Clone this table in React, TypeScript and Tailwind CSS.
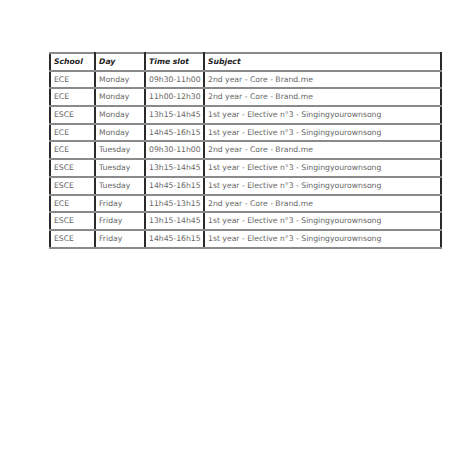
import React from "react";

const rows: [string, string, string, string][] = [
  ["ECE", "Monday", "09h30-11h00", "2nd year - Core - Brand.me"],
  ["ECE", "Monday", "11h00-12h30", "2nd year - Core - Brand.me"],
  ["ESCE", "Monday", "13h15-14h45", "1st year - Elective n°3 - Singingyourownsong"],
  ["ECE", "Monday", "14h45-16h15", "1st year - Elective n°3 - Singingyourownsong"],
  ["ECE", "Tuesday", "09h30-11h00", "2nd year - Core - Brand.me"],
  ["ESCE", "Tuesday", "13h15-14h45", "1st year - Elective n°3 - Singingyourownsong"],
  ["ESCE", "Tuesday", "14h45-16h15", "1st year - Elective n°3 - Singingyourownsong"],
  ["ECE", "Friday", "11h45-13h15", "2nd year - Core - Brand.me"],
  ["ESCE", "Friday", "13h15-14h45", "1st year - Elective n°3 - Singingyourownsong"],
  ["ESCE", "Friday", "14h45-16h15", "1st year - Elective n°3 - Singingyourownsong"],
];

const cell =
  "border-x-2 border-x-[#2a2a2a] border-y-2 border-y-[#8a8a8a] px-[3px] pt-[3px] align-top h-[17.7px] leading-[9px] whitespace-nowrap";

export default function App() {
  return (
    <div className="w-[452px] h-[452px] bg-white pt-[52px] pl-[49px] font-['DejaVu_Sans',Verdana,sans-serif]">
      <table className="border-collapse w-[393px] table-fixed text-[7.7px] text-[#666]">
        <colgroup>
          <col className="w-[45px]" />
          <col className="w-[50px]" />
          <col className="w-[59px]" />
          <col />
        </colgroup>
        <thead>
          <tr>
            {["School", "Day", "Time slot", "Subject"].map((h) => (
              <th key={h} className={cell + " text-left font-bold italic text-[#222]"}>
                {h}
              </th>
            ))}
          </tr>
        </thead>
        <tbody>
          {rows.map((r, i) => (
            <tr key={i}>
              {r.map((c, j) => (
                <td key={j} className={cell}>
                  {c}
                </td>
              ))}
            </tr>
          ))}
        </tbody>
      </table>
    </div>
  );
}
